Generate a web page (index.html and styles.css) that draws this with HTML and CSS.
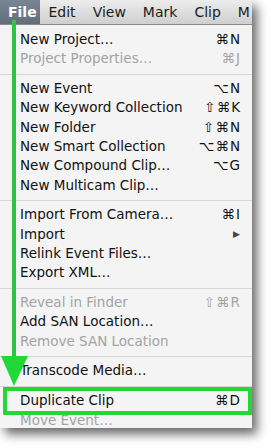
FILE: index.html
```html
<!DOCTYPE html>
<html lang="en">
<head>
    <meta charset="UTF-8">
    <title>File menu</title>
    <link rel="stylesheet" href="styles.css">
</head>
<body>
    <div class="shot">
        <div class="menubar">
            <span class="title active">File</span>
            <span class="title">Edit</span>
            <span class="title">View</span>
            <span class="title">Mark</span>
            <span class="title">Clip</span>
            <span class="title">M</span>
        </div>
        <div class="menu">
            <div class="item"><span>New Project…</span><span class="key">⌘N</span></div>
            <div class="item off"><span>Project Properties…</span><span class="key">⌘J</span></div>
            <div class="sep"></div>
            <div class="item"><span>New Event</span><span class="key">⌥N</span></div>
            <div class="item"><span>New Keyword Collection</span><span class="key">⇧⌘K</span></div>
            <div class="item"><span>New Folder</span><span class="key">⇧⌘N</span></div>
            <div class="item"><span>New Smart Collection</span><span class="key">⌥⌘N</span></div>
            <div class="item"><span>New Compound Clip…</span><span class="key">⌥G</span></div>
            <div class="item"><span>New Multicam Clip…</span></div>
            <div class="sep"></div>
            <div class="item"><span>Import From Camera…</span><span class="key">⌘I</span></div>
            <div class="item"><span>Import</span><span class="sub">▶</span></div>
            <div class="item"><span>Relink Event Files…</span></div>
            <div class="item"><span>Export XML…</span></div>
            <div class="sep"></div>
            <div class="item off"><span>Reveal in Finder</span><span class="key">⇧⌘R</span></div>
            <div class="item"><span>Add SAN Location…</span></div>
            <div class="item off"><span>Remove SAN Location</span></div>
            <div class="sep"></div>
            <div class="item"><span>Transcode Media…</span></div>
            <div class="sep"></div>
            <div class="item"><span>Duplicate Clip</span><span class="key">⌘D</span></div>
            <div class="item off"><span>Move Event…</span></div>
        </div>
    </div>

    <!-- green annotation drawn over the screenshot -->
    <svg class="marks" width="271" height="448" viewBox="0 0 271 448">
        <rect x="12" y="20" width="4" height="340" fill="#2fc444"/>
        <polygon points="1,356 28,356 14,386" fill="#22d838"/>
        <rect x="5" y="389" width="245" height="24" fill="none" stroke="#22d838" stroke-width="4"/>
    </svg>
</body>
</html>
```

FILE: styles.css
```css
* {
    margin: 0;
    padding: 0;
    box-sizing: border-box;
}
body {
    background-color: #ffffff;
    font-family: "DejaVu Sans", sans-serif;
    color: #111;
    width: 271px;
    height: 448px;
    overflow: hidden;
    position: relative;
}
.shot {
    width: 252px;
    height: 428px;
    overflow: hidden;
    box-shadow: 5px 6px 10px rgba(0, 0, 0, 0.6);
    background-color: #f4f4f4;
}
.menubar {
    height: 25px;
    display: flex;
    align-items: stretch;
    background: linear-gradient(#ececec, #cfcfcf);
    border-bottom: 1px solid #8a8a8a;
    font-size: 14px;
    white-space: nowrap;
}
.title {
    padding: 0 8.5px;
    line-height: 25px;
    color: #1c1c1c;
}
.title.active {
    padding: 0 8px;
    width: 40px;
    background: linear-gradient(#7a8593, #626d7b);
    color: #ffffff;
    font-weight: bold;
}
.menu {
    padding-top: 5px;
    font-size: 13.5px;
}
.item {
    height: 19.3px;
    line-height: 19.3px;
    display: flex;
    justify-content: space-between;
    padding: 0 11px 0 20px;
    white-space: nowrap;
}
.item.off {
    color: #a3a3a3;
}
.key {
    letter-spacing: 1px;
}
.sub {
    font-size: 9px;
    color: #444;
    padding-right: 1px;
}
.sep {
    height: 1px;
    margin: 5px 0 4.5px;
    background-color: #d6d6d6;
}
.marks {
    position: absolute;
    left: 0;
    top: 0;
}
```
